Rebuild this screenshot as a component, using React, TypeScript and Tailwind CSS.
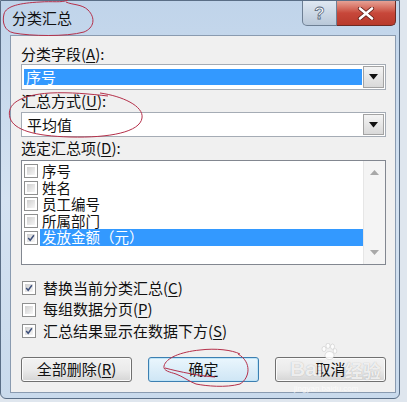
import React from 'react';

const font = { fontFamily: '"Noto Sans CJK SC", "Liberation Sans", sans-serif' };

function Check({ checked }: { checked?: boolean }) {
  return (
    <div className="w-[14px] h-[14px] border border-[#8e8f8f] bg-white p-[2px] shrink-0">
      <div className="w-full h-full bg-gradient-to-br from-[#cfcfcf] to-[#f7f7f7] relative">
        {checked && (
          <svg viewBox="0 0 10 10" className="absolute inset-0 w-full h-full">
            <path d="M1.5 5 L4 7.8 L8.6 1.6" fill="none" stroke="#3d4f7a" strokeWidth="1.8" />
          </svg>
        )}
      </div>
    </div>
  );
}

function Mnemonic({ k }: { k: string }) {
  return (
    <>
      (<span className="underline underline-offset-2">{k}</span>)
    </>
  );
}

function DropButton() {
  return (
    <div className="w-[21px] h-full border border-[#a3a3a3] bg-gradient-to-b from-[#f4f4f4] to-[#d9d9d9] flex items-center justify-center">
      <svg width="9" height="6" viewBox="0 0 9 6">
        <path d="M0 0 H9 L4.5 5.5 Z" fill="#111" />
      </svg>
    </div>
  );
}

function Btn({ children, def }: { children: React.ReactNode; def?: boolean }) {
  return (
    <div
      className={
        'w-[111px] h-[25px] rounded-[3px] flex items-center justify-center text-[15px] text-[#111] ' +
        (def
          ? 'border border-[#3c7fb1] bg-gradient-to-b from-[#eaf6fd] to-[#cfe6f5] shadow-[inset_0_0_0_1px_#bfe4f7]'
          : 'border border-[#707070] bg-gradient-to-b from-[#f2f2f2] via-[#ebebeb] to-[#d5d5d5] shadow-[inset_0_0_0_1px_#fbfbfb]')
      }
    >
      {children}
    </div>
  );
}

const items = ['序号', '姓名', '员工编号', '所属部门', '发放金额（元）'];

export default function App() {
  return (
    <div className="relative w-[407px] h-[402px] overflow-hidden bg-[#dfe6ee]" style={font}>
      {/* window frame */}
      <div className="w-[400px] h-[399px] bg-gradient-to-b from-[#c0d4ea] via-[#d4e2f1] to-[#c9daec] border border-[#5a6e86] rounded-b-[6px] flex flex-col">
        {/* title bar */}
        <div className="h-[34px] flex items-start justify-between">
          <div className="pl-[11px] pt-[8px] text-[15px] leading-[18px] text-[#111]">分类汇总</div>
          <div className="flex mr-[3px]">
            <div className="w-[35px] h-[25px] border border-[#6d7f94] border-t-0 rounded-bl-[5px] bg-gradient-to-b from-[#dfe8f2] to-[#b9c8d9] flex items-center justify-center">
              <span className="text-[17px] font-bold text-white leading-none" style={{ WebkitTextStroke: '0.8px #55677c', fontFamily: '"Liberation Sans", sans-serif' }}>?</span>
            </div>
            <div className="w-[59px] h-[25px] border border-[#6b2a24] border-t-0 border-l-0 rounded-br-[5px] bg-gradient-to-b from-[#e6a195] via-[#c7473a] to-[#b83a2c] flex items-center justify-center">
              <svg width="18" height="13" viewBox="0 0 18 13">
                <path d="M3 1.5 L15 11.5 M15 1.5 L3 11.5" stroke="#5a1a14" strokeWidth="4.2" strokeLinecap="round" />
                <path d="M3 1.5 L15 11.5 M15 1.5 L3 11.5" stroke="#fff" strokeWidth="2.6" strokeLinecap="round" />
              </svg>
            </div>
          </div>
        </div>

        {/* client area */}
        <div className="ml-[9px] mr-[3px] h-[358px] bg-[#f0f0f0] border border-[#8a9bb0] pt-[7px] pl-[10px] pr-[9px] text-[15px] text-[#111]">
          <div className="h-[21px] leading-[21px]">
            分类字段<Mnemonic k="A" />:
          </div>
          <div className="h-[26px] border border-[#a5acb5] bg-white flex items-center p-[1px] gap-[1px]">
            <div className="flex-1 h-[16px] bg-[#3399ff] text-white leading-[16px] pl-[2px] ml-[1px]">序号</div>
            <DropButton />
          </div>

          <div className="h-[22px] leading-[22px]">
            汇总方式<Mnemonic k="U" />:
          </div>
          <div className="h-[25px] border border-[#a5acb5] bg-white flex items-center p-[1px] gap-[1px]">
            <div className="flex-1 leading-[16px] pl-[4px]">平均值</div>
            <DropButton />
          </div>

          <div className="h-[23px] leading-[22px]">
            选定汇总项<Mnemonic k="D" />:
          </div>
          <div className="h-[105px] border border-[#828790] bg-white flex">
            <div className="flex-1 pt-[2px] pl-[2px] text-[14.5px]">
              {items.map((t, i) => (
                <div key={t} className="h-[16.6px] flex items-center">
                  <Check checked={i === 4} />
                  <div
                    className={
                      'ml-[2px] flex-1 h-full leading-[16px] pl-[2px] ' +
                      (i === 4 ? 'bg-[#3399ff] text-white' : '')
                    }
                  >
                    {t}
                  </div>
                </div>
              ))}
            </div>
            <div className="w-[22px] bg-[#f4f4f4] border-l border-[#e6e6e6] flex flex-col items-center justify-between py-[9px]">
              <svg width="9" height="5" viewBox="0 0 9 5"><path d="M0 5 H9 L4.5 0 Z" fill="#a8a8a8" /></svg>
              <svg width="9" height="5" viewBox="0 0 9 5"><path d="M0 0 H9 L4.5 5 Z" fill="#a8a8a8" /></svg>
            </div>
          </div>

          <div className="mt-[12px] flex flex-col">
            <div className="h-[22px] flex items-center gap-[7px] pl-[1px]">
              <Check checked />
              <span>替换当前分类汇总<Mnemonic k="C" /></span>
            </div>
            <div className="h-[21px] flex items-center gap-[7px] pl-[1px]">
              <Check />
              <span>每组数据分页<Mnemonic k="P" /></span>
            </div>
            <div className="h-[22px] flex items-center gap-[7px] pl-[1px]">
              <Check checked />
              <span>汇总结果显示在数据下方<Mnemonic k="S" /></span>
            </div>
          </div>

          <div className="mt-[15px] flex gap-[16px]">
            <Btn>全部删除<Mnemonic k="R" /></Btn>
            <Btn def>确定</Btn>
            <Btn>取消</Btn>
          </div>
        </div>
      </div>

      {/* watermark */}
      <div className="absolute left-[290px] top-[358px] flex items-end pointer-events-none text-white/80" style={{ textShadow: '0 0 1px rgba(120,120,120,0.6)' }}>
        <span className="text-[21px] font-bold leading-none" style={{ fontFamily: '"Liberation Sans", sans-serif' }}>Bai</span>
        <span className="ml-[22px] text-[18px] font-bold leading-none">经验</span>
      </div>
      <svg width="18" height="18" viewBox="0 0 16 18" className="absolute left-[320px] top-[343px] pointer-events-none">
        <g fill="rgba(255,255,255,0.85)" stroke="rgba(150,150,150,0.5)" strokeWidth="0.5">
          <ellipse cx="3" cy="6" rx="2" ry="2.6" />
          <ellipse cx="7" cy="2.8" rx="2" ry="2.6" />
          <ellipse cx="11.5" cy="3.6" rx="2" ry="2.6" />
          <ellipse cx="14" cy="8" rx="1.8" ry="2.4" />
          <ellipse cx="8.5" cy="12.5" rx="4.5" ry="4" />
        </g>
      </svg>
      <div className="absolute left-[294px] top-[383px] text-[8px] text-white/70 pointer-events-none" style={{ fontFamily: '"Liberation Sans", sans-serif' }}>
        jingyan.baidu.com
      </div>

      {/* red annotations */}
      <svg className="absolute inset-0 pointer-events-none" width="407" height="402" viewBox="0 0 407 402">
        <g fill="none" stroke="#b5304a" strokeWidth="1">
          <path d="M66 2 C72 5 82 4 88 10 C96 18 94 28 84 32 C66 37 30 36 14 33 C4 31 2 22 4 14 C6 6 20 3 40 2 C52 1 62 3 68 0" />
          <path d="M100 93 C122 96 144 106 142 118 C140 132 110 138 70 137 C34 136 14 130 10 118 C6 104 20 95 50 93 C70 92 90 94 108 96" />
          <path d="M238 354 C252 362 250 378 240 384 C226 388 206 386 196 384 C190 382 182 376 176 374 C170 372 163 371 164 366 C166 358 180 352 200 350 C216 348 232 350 240 354 M165 368 C180 372 200 376 215 377" />
        </g>
      </svg>
    </div>
  );
}
